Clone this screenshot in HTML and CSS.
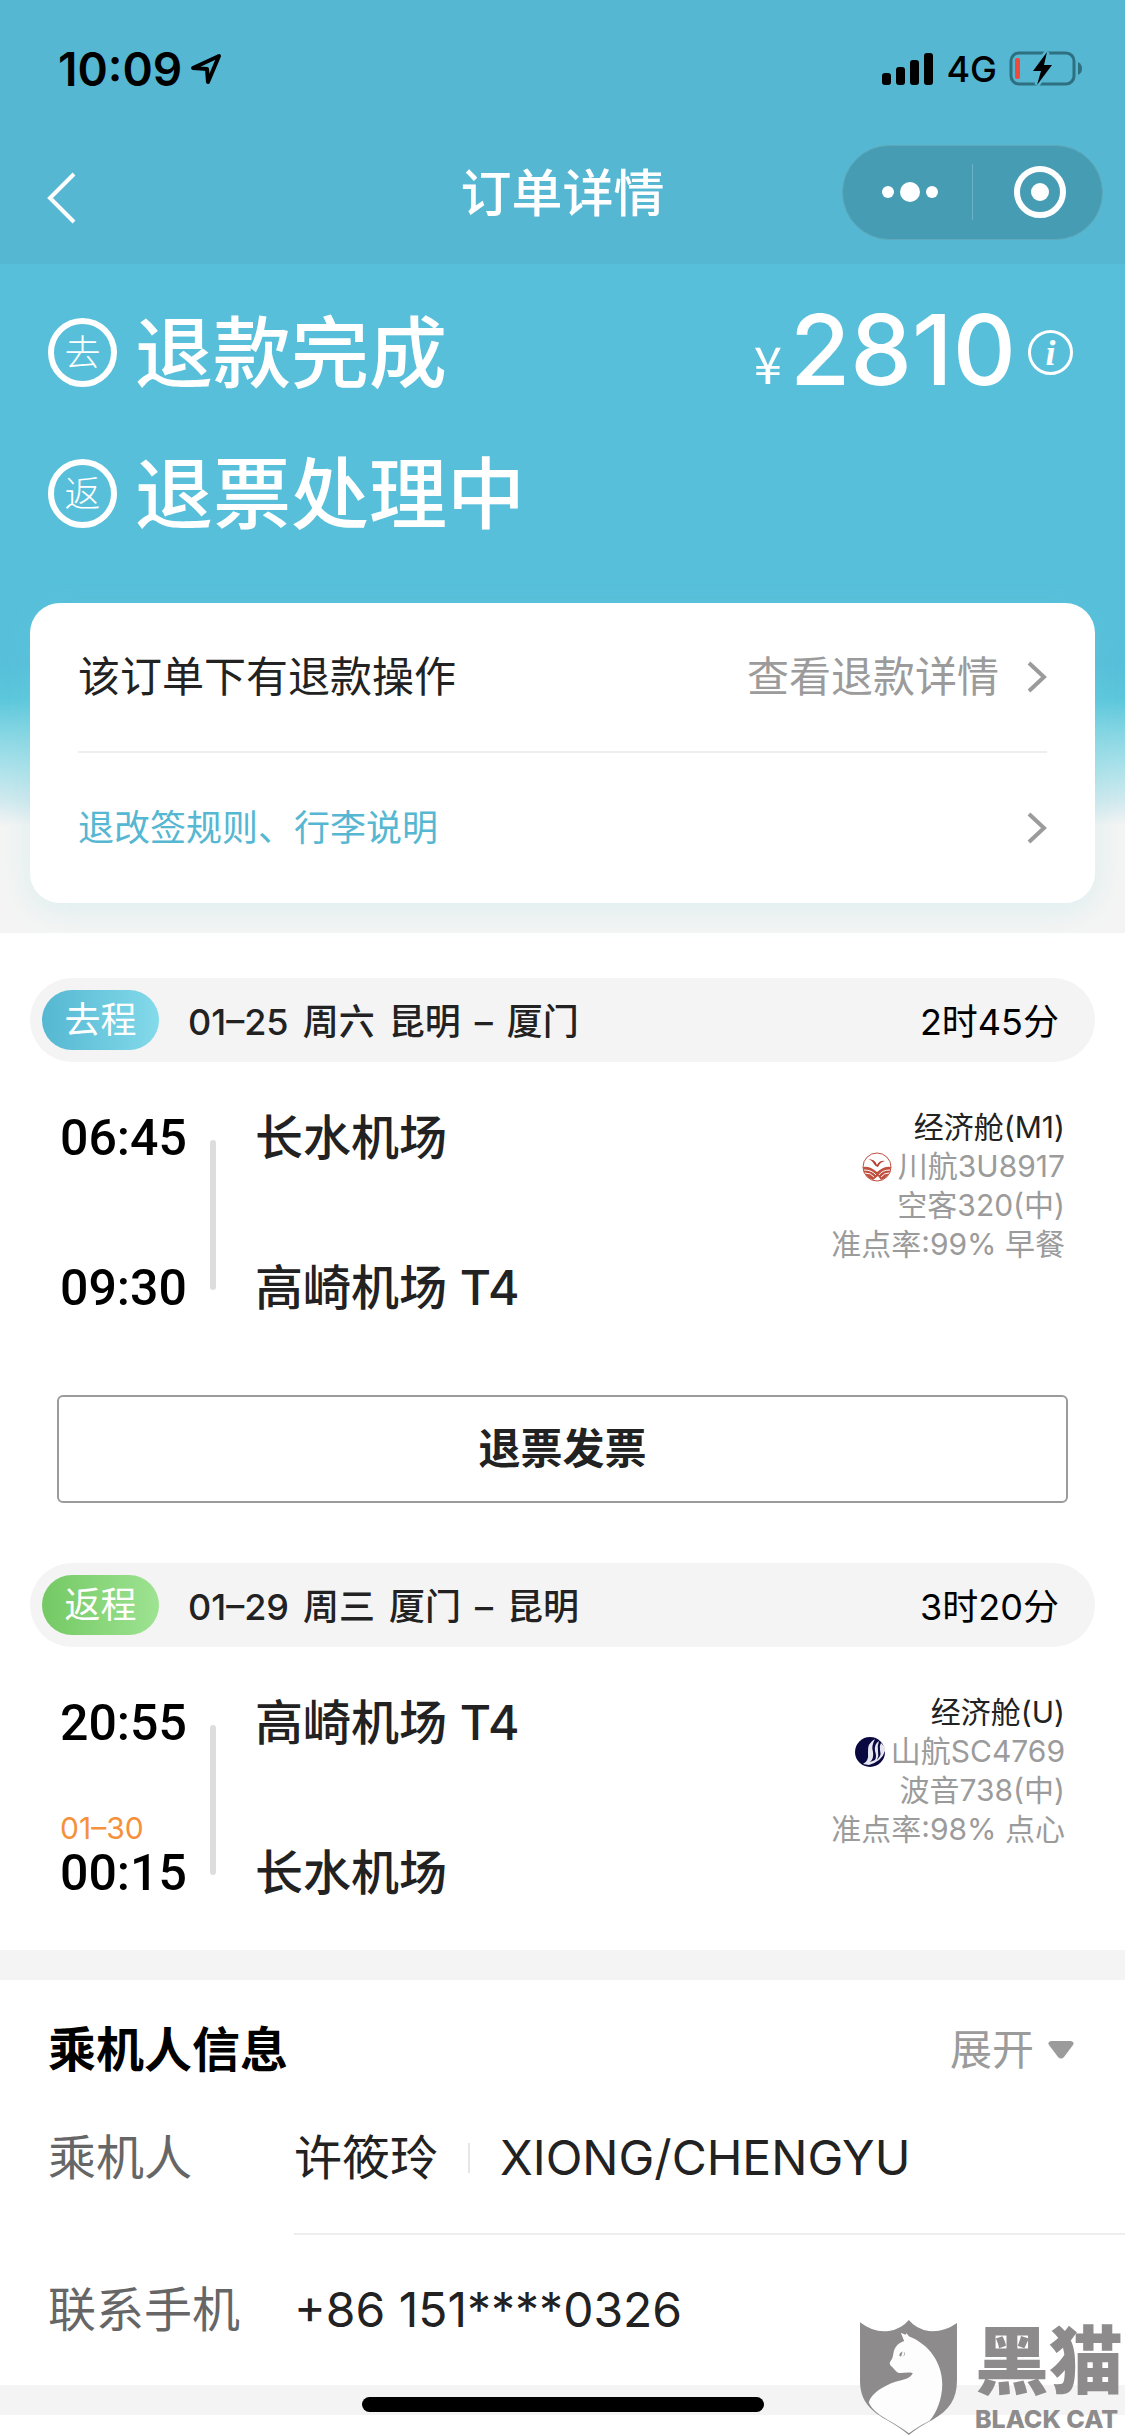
FILE: index.html
```html
<!DOCTYPE html>
<html lang="zh-CN">
<head>
    <meta charset="UTF-8">
    <meta name="viewport" content="width=device-width, initial-scale=1">
    <title>订单详情</title>
    <link rel="stylesheet" href="styles.css">
</head>
<body>

    <header class="topbar">
        <div class="status">
            <span class="clock">10:09</span>
            <svg class="locate" width="32" height="32" viewBox="0 0 32 32"><path d="M3 15 L29 3 L18 29 L17 16 Z" fill="none" stroke="#000" stroke-width="4" stroke-linejoin="round"/></svg>
            <svg class="signal" width="52" height="32" viewBox="0 0 52 32">
                <rect x="0" y="20" width="9" height="12" rx="3"/>
                <rect x="14" y="14" width="9" height="18" rx="3"/>
                <rect x="28" y="7" width="9" height="25" rx="3"/>
                <rect x="42" y="0" width="9" height="32" rx="3"/>
            </svg>
            <span class="network">4G</span>
            <svg class="battery" width="74" height="36" viewBox="0 0 74 36">
                <rect x="2" y="2" width="63" height="31" rx="8" fill="none" stroke="#2f7080" stroke-width="3"/>
                <path d="M69 11 Q73 13 73 17.500 Q73 22 69 24 Z" fill="#2f7080"/>
                <rect x="6" y="7" width="5" height="21" rx="2" fill="#f0483a"/>
                <path d="M38 1 L24 20 H32 L28 34 L43 14 H35 Z" fill="#000" stroke="#55b7d2" stroke-width="5" paint-order="stroke"/>
            </svg>
        </div>
        <nav class="nav">
            <button class="back" type="button" aria-label="返回">
                <svg width="30" height="52" viewBox="0 0 30 52"><path d="M27 2 L3 26 L27 50" fill="none" stroke="#fff" stroke-width="4"/></svg>
            </button>
            <h1 class="title">订单详情</h1>
            <div class="capsule">
                <button class="capsule-btn" type="button" aria-label="更多">
                    <svg width="58" height="20" viewBox="0 0 58 20" fill="#fff"><circle cx="7" cy="10" r="6"/><circle cx="29" cy="10" r="10"/><circle cx="51" cy="10" r="6"/></svg>
                </button>
                <button class="capsule-btn" type="button" aria-label="关闭">
                    <svg width="52" height="52" viewBox="0 0 52 52"><circle cx="26" cy="26" r="23" fill="none" stroke="#fff" stroke-width="6"/><circle cx="26" cy="26" r="9" fill="#fff"/></svg>
                </button>
            </div>
        </nav>
    </header>

    <section class="hero">
        <div class="state">
            <span class="badge">去</span>
            <h2 class="state-name">退款完成</h2>
            <div class="price">
                <span class="yen">¥</span><span class="amount">2810</span>
                <button class="info" type="button" aria-label="价格明细">i</button>
            </div>
        </div>
        <div class="state">
            <span class="badge">返</span>
            <h2 class="state-name">退票处理中</h2>
        </div>

        <div class="card">
            <a class="card-row" href="#">
                <span>该订单下有退款操作</span>
                <span class="more">查看退款详情</span>
                <svg class="arrow" width="21" height="32" viewBox="0 0 21 32"><path d="M3 2 L18 16 L3 30" fill="none" stroke="#9b9b9b" stroke-width="4"/></svg>
            </a>
            <a class="card-row rules" href="#">
                <span>退改签规则、行李说明</span>
                <svg class="arrow" width="21" height="32" viewBox="0 0 21 32"><path d="M3 2 L18 16 L3 30" fill="none" stroke="#9b9b9b" stroke-width="4"/></svg>
            </a>
        </div>
    </section>

    <main>
        <section class="trips">
            <article class="leg">
                <div class="leg-head">
                    <span class="tag">去程</span>
                    <h3 class="route"><span>01–25</span> <span>周六</span> <span>昆明</span> <span>–</span> <span>厦门</span></h3>
                    <span class="duration">2时45分</span>
                </div>
                <div class="leg-body">
                    <div class="times">
                        <div>06:45</div>
                        <div>09:30</div>
                    </div>
                    <div class="line"></div>
                    <div class="airports">
                        <div>长水机场</div>
                        <div>高崎机场 T4</div>
                    </div>
                    <div class="details">
                        <div class="cabin">经济舱(M1)</div>
                        <div class="flight">
                            <svg width="30" height="30" viewBox="0 0 30 30">
                                <circle cx="15" cy="15" r="14" fill="#fff" stroke="#c0503f" stroke-width="1"/>
                                <path d="M1 15 Q8 14 15 20 Q22 14 29 15 Q28 25 19 28 L16 24 L11 28 Q2 25 1 15Z" fill="#c0503f"/>
                                <path d="M2 18 Q10 18 14 23 M3 21 Q9 21 12 25 M28 18 Q20 18 17 23 M27 21 Q22 21 19 25" fill="none" stroke="#fff" stroke-width="1"/>
                                <path d="M6 7 Q13 7 15 13 Q18 8 23 9 Q18 10 16 15 Q14 15 12 12 Q10 8 6 7Z" fill="#b53a2a"/>
                            </svg>
                            <span>川航3U8917</span>
                        </div>
                        <div>空客320(中)</div>
                        <div>准点率:99% 早餐</div>
                    </div>
                </div>
                <button class="invoice" type="button">退票发票</button>
            </article>

            <article class="leg">
                <div class="leg-head">
                    <span class="tag tag-return">返程</span>
                    <h3 class="route"><span>01–29</span> <span>周三</span> <span>厦门</span> <span>–</span> <span>昆明</span></h3>
                    <span class="duration">3时20分</span>
                </div>
                <div class="leg-body">
                    <div class="times">
                        <div>20:55</div>
                        <div><div class="next-day">01–30</div>00:15</div>
                    </div>
                    <div class="line"></div>
                    <div class="airports">
                        <div>高崎机场 T4</div>
                        <div>长水机场</div>
                    </div>
                    <div class="details">
                        <div class="cabin">经济舱(U)</div>
                        <div class="flight">
                            <svg width="30" height="30" viewBox="0 0 30 30">
                                <circle cx="15" cy="15" r="15" fill="#0a0840"/>
                                <path d="M8 27 Q14 24 13 16 Q12 6 20 2 Q16 9 18 15 Q19 22 15 25 L20 23 Q22 20 20 14 Q19 7 24 4 Q22 9 23 14 Q24 19 22 23 L25 19 Q26 17 25 13 Q24 9 26 6 L30 10 V14 Q27 24 14 28Z" fill="#e6e6f0"/>
                            </svg>
                            <span>山航SC4769</span>
                        </div>
                        <div>波音738(中)</div>
                        <div>准点率:98% 点心</div>
                    </div>
                </div>
            </article>
        </section>

        <section class="passenger">
            <div class="passenger-head">
                <h2 class="passenger-title">乘机人信息</h2>
                <button class="expand" type="button">
                    展开
                    <svg width="26" height="18" viewBox="0 0 26 18"><path d="M3 0 H23 Q27 1 25 4 L16 16 Q13 19 10 16 L1 4 Q-1 1 3 0Z" fill="#9b9b9b"/></svg>
                </button>
            </div>
            <dl class="fields">
                <dt>乘机人</dt>
                <dd class="names"><span>许筱玲</span><span class="bar"></span><span>XIONG/CHENGYU</span></dd>
                <dt>联系手机</dt>
                <dd>+86 151****0326</dd>
            </dl>
        </section>
    </main>

    <div class="home-indicator"></div>

    <div class="watermark">
        <svg width="97" height="115" viewBox="34 33 290 344">
            <path d="M34 40 Q75 72 120 66 Q158 60 180 33 Q202 60 240 66 Q285 70 324 42 V215 C324 270 300 305 250 332 Q210 352 180 377 Q150 352 110 330 C60 302 34 270 34 215Z" fill="#8e8b8c"/>
            <path d="M156 71 L170 77 L173 73 L181 82 C240 105 280 160 280 225 C280 270 262 312 242 334 C220 345 195 360 180 372 C150 348 120 335 98 320 C80 308 66 294 60 279 C70 252 100 232 140 218 C165 211 184 208 192 192 C178 188 162 193 148 191 C140 187 136 178 126 170 C122 165 122 160 126 155 C136 142 131 130 140 115 C147 104 157 100 166 96 Z" fill="#fdfdfd"/>
            <path d="M151 139 Q152 130 161 127 L157 143 Z M165 128 Q171 134 164 143 Q167 135 165 128Z" fill="#8e8b8c"/>
        </svg>
        <div class="brand">
            <div class="brand-cn">黑猫</div>
            <div class="brand-en">BLACK CAT</div>
        </div>
    </div>

</body>
</html>
```

FILE: styles.css
```css
* {
    box-sizing: border-box;
}

body {
    margin: 0;
    min-height: 100vh;
    position: relative;
    background: #fff;
    color: #222;
    font-family: Inter, "Noto Sans CJK SC", sans-serif;
    font-size: 48px;
    line-height: 60px;
}

h1, h2, h3, dl, dd {
    margin: 0;
    font-weight: 500;
}

button {
    padding: 0;
    border: 0;
    background: none;
    color: inherit;
    font-family: inherit;
    line-height: inherit;
    cursor: pointer;
}

a {
    color: inherit;
    text-decoration: none;
}

svg {
    display: block;
    flex: none;
}

/* top bar */
.topbar {
    background: #55b7d2;
    color: #fff;
}

.status {
    display: flex;
    align-items: center;
    height: 132px;
    padding: 6px 42px 0 58px;
    color: #000;
}

.clock {
    font-size: 46px;
    font-weight: 600;
}

.locate {
    margin-left: 8px;
}

.signal {
    margin-left: auto;
}

.network {
    margin: 0 12px;
    font-size: 36px;
    font-weight: 500;
}

.nav {
    display: grid;
    grid-template-columns: 1fr auto 1fr;
    align-items: center;
    height: 132px;
    padding-bottom: 12px;
}

.back {
    justify-self: start;
    padding-top: 12px;
    margin-left: 47px;
}

.title {
    padding-top: 4px;
    font-size: 51px;
}

.capsule {
    display: flex;
    justify-self: end;
    align-items: center;
    width: 261px;
    height: 95px;
    margin-right: 22px;
    border: 1px solid #5fa9bb;
    border-radius: 48px;
    background: #469cb3;
}

.capsule-btn {
    display: flex;
    flex: 1;
    align-items: center;
    justify-content: center;
    height: 56px;
    padding-left: 4px;
}

.capsule-btn + .capsule-btn {
    border-left: 1px solid #6bb3c6;
}

/* order state */
.hero {
    padding: 18px 30px 30px;
    background: linear-gradient(#57bfda 0%, #57bfda 60%, #5cc7dc 65%, #85d6e3 70%, #aae1ea 75%, #cfe9ee 80%, #f4f4f4 84%);
    color: #fff;
}

.state {
    display: flex;
    align-items: center;
    height: 141px;
    padding: 0 22px 0 18px;
}

.badge {
    width: 69px;
    height: 69px;
    border: 6px solid #fff;
    border-radius: 50%;
    font-size: 36px;
    font-weight: 300;
    line-height: 59px;
    text-align: center;
}

.state-name {
    margin-left: 18px;
    padding-top: 2px;
    font-size: 78px;
    line-height: 90px;
}

.price {
    display: flex;
    align-items: center;
    margin-left: auto;
}

.yen {
    padding-top: 18px;
    font-family: "Noto Sans CJK SC", sans-serif;
    font-size: 51px;
}

.amount {
    margin: 0 12px 0 8px;
    padding-bottom: 6px;
    font-size: 98px;
    font-weight: 500;
    line-height: 106px;
}

.info {
    width: 45px;
    height: 45px;
    border: 3px solid #fff;
    border-radius: 50%;
    font-family: "Liberation Serif", serif;
    font-size: 36px;
    font-style: italic;
    font-weight: 700;
    line-height: 36px;
}

.card {
    margin-top: 39px;
    padding: 0 48px;
    border-radius: 30px;
    background: #fff;
    box-shadow: 0 6px 30px rgba(120, 215, 220, 0.2);
    color: #222;
}

.card-row {
    display: flex;
    align-items: center;
    height: 150px;
    font-size: 42px;
}

.card-row:first-child {
    border-bottom: 2px solid #eee;
}

.rules {
    color: #55b7d2;
    font-size: 36px;
}

.more {
    margin-left: auto;
    color: #9b9b9b;
}

.arrow {
    margin-left: auto;
}

.more + .arrow {
    margin-left: 27px;
}

/* flights */
.trips {
    padding: 45px 30px 47px;
    border-bottom: 30px solid #f4f4f4;
}

.trips .leg + .leg {
    margin-top: 60px;
}

.leg-head {
    display: flex;
    align-items: center;
    height: 84px;
    padding: 0 36px 0 12px;
    border-radius: 42px;
    background: #f4f4f4;
    font-size: 36px;
}

.tag {
    width: 117px;
    border-radius: 30px;
    background: linear-gradient(90deg, #55b7d2, #83daea);
    color: #fff;
    text-align: center;
}

.tag-return {
    background: linear-gradient(90deg, #74c964, #9ee392);
}

.route {
    display: flex;
    gap: 14px;
    margin-left: 29px;
    padding-top: 4px;
    font-size: 36px;
}

.duration {
    margin-left: auto;
    padding-top: 4px;
    color: #000;
}

.leg-body {
    display: flex;
    height: 210px;
    margin: 46px 30px 0;
}

.times,
.airports {
    display: flex;
    flex-direction: column;
    justify-content: space-between;
    font-weight: 500;
}

.times {
    width: 150px;
    color: #000;
    font-family: Roboto, sans-serif;
    font-size: 50px;
}

.next-day {
    color: #f5913a;
    font-family: Inter, sans-serif;
    font-size: 30px;
    font-weight: 400;
    line-height: 30px;
}

.line {
    width: 6px;
    margin: 32px 39px 28px 0;
    border-radius: 3px;
    background: #ddd;
}

.details {
    margin-left: auto;
    color: #9b9b9b;
    font-size: 30px;
    line-height: 39px;
    text-align: right;
}

.cabin {
    color: #222;
}

.flight {
    display: flex;
    align-items: center;
    justify-content: flex-end;
    gap: 6px;
}

.invoice {
    display: block;
    width: calc(100% - 54px);
    height: 108px;
    margin: 77px auto 0;
    border: 2px solid #9b9b9b;
    border-radius: 6px;
    font-size: 42px;
    font-weight: 700;
}

/* passenger */
.passenger {
    padding-left: 48px;
    border-bottom: 30px solid #f4f4f4;
}

.passenger-head {
    display: flex;
    align-items: center;
    justify-content: space-between;
    height: 103px;
    padding: 36px 51px 0 0;
}

.passenger-title {
    color: #000;
    font-size: 48px;
    font-weight: 700;
}

.expand {
    display: flex;
    align-items: center;
    gap: 14px;
    color: #9b9b9b;
    font-size: 42px;
}

.fields {
    display: grid;
    grid-template-columns: 246px 1fr;
    line-height: 150px;
}

.fields dt {
    color: #666;
    font-weight: 400;
}

.fields dd {
    font-weight: 400;
}

.names {
    display: flex;
    align-items: center;
    gap: 30px;
    border-bottom: 2px solid #eee;
}

.bar {
    width: 2px;
    height: 30px;
    background: #e6e6e6;
}

/* overlays */
.home-indicator {
    position: absolute;
    bottom: 24px;
    left: 50%;
    width: 402px;
    height: 15px;
    margin-left: -201px;
    border-radius: 8px;
    background: #000;
}

.watermark {
    position: absolute;
    right: 2px;
    bottom: 0;
    display: flex;
    gap: 18px;
    color: #8e8b8c;
}

.brand-cn {
    font-size: 74px;
    font-weight: 900;
    line-height: 82px;
}

.brand-en {
    font-size: 25px;
    font-weight: 800;
    line-height: 34px;
}
```
